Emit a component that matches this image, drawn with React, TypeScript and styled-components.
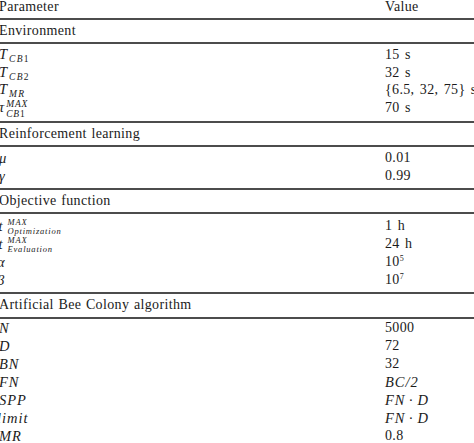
import React from "react";
import styled, { createGlobalStyle } from "styled-components";

const Global = createGlobalStyle`
  html, body { margin: 0; padding: 0; background: #ffffff; }
  body {
    font-family: "Liberation Serif", "Times New Roman", serif;
    color: #1b1b1b;
    overflow: hidden;
  }
`;

const Table = styled.div`
  width: 475px;
  margin-left: -1px;
  font-size: 14px;
  letter-spacing: 0.35px;
  word-spacing: 0.8px;
`;

const Line = styled.div<{ $h: number }>`
  display: flex;
  height: ${(p) => p.$h}px;
  line-height: ${(p) => p.$h}px;
  white-space: nowrap;
`;

const ParamCell = styled.div`
  flex: 0 0 386px;
`;

const ValueCell = styled.div`
  flex: 1 1 auto;
  min-width: 0;
  word-spacing: 1.5px;
`;

const HeaderRow = styled.div`
  display: flex;
  height: 18px;
  line-height: 16px;
  white-space: nowrap;
  & > div { margin-top: -1.5px; }
`;

const Rule = styled.div`
  height: 2px;
  background: #4c4c4c;
  box-shadow: 0 0 0.6px #a0a0a0;
`;

const SectionTitle = styled.div<{ $h: number }>`
  height: ${(p) => p.$h}px;
  display: flex;
  align-items: center;
  box-sizing: border-box;
`;

const Rows = styled.div<{ $top: number; $bottom: number }>`
  padding-top: ${(p) => p.$top}px;
  padding-bottom: ${(p) => p.$bottom}px;
`;

const Var = styled.i<{ $shift?: number }>`
  font-style: italic;
  font-size: 14.5px;
  margin-left: ${(p) => p.$shift ?? 0}px;
  letter-spacing: 1px;
`;

const Sub = styled.span`
  font-style: italic;
  font-size: 9.5px;
  letter-spacing: 1.3px;
  vertical-align: -3px;
  line-height: 0;
  margin-left: 1px;
`;

const Up = styled.span`
  font-style: normal;
`;

const Stack = styled.span<{ $size: number; $lh: number; $raise: number; $gap: number }>`
  display: inline-flex;
  flex-direction: column;
  font-size: ${(p) => p.$size}px;
  line-height: ${(p) => p.$lh}px;
  vertical-align: ${(p) => p.$raise}px;
  font-style: italic;
  letter-spacing: 0.8px;
  margin-left: ${(p) => p.$gap}px;
`;

const Pow = styled.sup`
  font-size: 8px;
  vertical-align: 5px;
  line-height: 0;
  letter-spacing: 0;
`;

const Dot = styled.span`
  font-style: normal;
  margin: 0 3px;
`;

type Item = { p: React.ReactNode; v: React.ReactNode };
type Section = {
  title: string;
  titleH: number;
  items: Item[];
  rowH: number;
  top: number;
  bottom: number;
};

const env: Item[] = [
  { p: <><Var>T</Var><Sub>CB<Up>1</Up></Sub></>, v: "15 s" },
  { p: <><Var>T</Var><Sub>CB<Up>2</Up></Sub></>, v: "32 s" },
  { p: <><Var>T</Var><Sub>MR</Sub></>, v: "{6.5, 32, 75} s" },
  {
    p: (
      <>
        <Var>τ</Var>
        <Stack $size={9.5} $lh={10} $raise={5} $gap={1}>
          <span>MAX</span>
          <span>CB<Up>1</Up></span>
        </Stack>
      </>
    ),
    v: "70 s",
  },
];

const rl: Item[] = [
  { p: <Var>μ</Var>, v: "0.01" },
  { p: <Var>γ</Var>, v: "0.99" },
];

const TStack = ({ label }: { label: string }) => (
  <>
    <Var $shift={-0.5}>t</Var>
    <Stack $size={8.5} $lh={9} $raise={6} $gap={4}>
      <span>MAX</span>
      <span>{label}</span>
    </Stack>
  </>
);

const obj: Item[] = [
  { p: <TStack label="Optimization" />, v: "1 h" },
  { p: <TStack label="Evaluation" />, v: "24 h" },
  { p: <Var $shift={-2}>α</Var>, v: <>10<Pow>5</Pow></> },
  { p: <Var $shift={-2}>β</Var>, v: <>10<Pow>7</Pow></> },
];

const abc: Item[] = [
  { p: <Var>N</Var>, v: "5000" },
  { p: <Var>D</Var>, v: "72" },
  { p: <Var>BN</Var>, v: "32" },
  { p: <Var>FN</Var>, v: <Var>BC/2</Var> },
  { p: <Var>SPP</Var>, v: <Var>FN<Dot>·</Dot>D</Var> },
  { p: <Var $shift={-2}>limit</Var>, v: <Var>FN<Dot>·</Dot>D</Var> },
  { p: <Var>MR</Var>, v: "0.8" },
];

const sections: Section[] = [
  { title: "Environment", titleH: 22, items: env, rowH: 17.7, top: 2, bottom: 4.2 },
  { title: "Reinforcement learning", titleH: 22, items: rl, rowH: 18, top: 2, bottom: 3 },
  { title: "Objective function", titleH: 22, items: obj, rowH: 18, top: 2.7, bottom: 3.3 },
  { title: "Artificial Bee Colony algorithm", titleH: 23, items: abc, rowH: 18.1, top: 0, bottom: 0 },
];

export default function App() {
  return (
    <>
      <Global />
      <Table>
        <HeaderRow>
          <ParamCell>Parameter</ParamCell>
          <ValueCell>Value</ValueCell>
        </HeaderRow>
        {sections.map((s) => (
          <React.Fragment key={s.title}>
            <Rule />
            <SectionTitle $h={s.titleH}>{s.title}</SectionTitle>
            <Rule />
            <Rows $top={s.top} $bottom={s.bottom}>
              {s.items.map((it, j) => (
                <Line key={j} $h={s.rowH}>
                  <ParamCell>{it.p}</ParamCell>
                  <ValueCell>{it.v}</ValueCell>
                </Line>
              ))}
            </Rows>
          </React.Fragment>
        ))}
      </Table>
    </>
  );
}
